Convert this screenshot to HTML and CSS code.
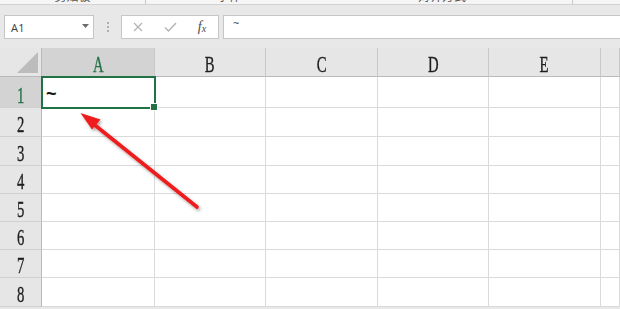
FILE: index.html
```html
<!DOCTYPE html>
<html>
<head>
<meta charset="utf-8">
<link rel="stylesheet" href="styles.css">
</head>
<body>
<div class="app">
  <div class="ribbon-edge">
    <div class="grp grp-1"><span>剪贴板</span></div>
    <div class="grp grp-2"><span>字体</span></div>
    <div class="grp grp-3"><span>对齐方式</span></div>
    <div class="grp grp-4"></div>
  </div>

  <div class="formula-bar">
    <div class="name-box">
      <span class="name-text">A1</span>
      <svg class="dd" width="7" height="4" viewBox="0 0 7 4"><path d="M0 0H7L3.5 4Z" fill="#6d6d6d"/></svg>
    </div>
    <div class="grip"><i></i><i></i><i></i></div>
    <div class="fx-box">
      <div class="slot">
        <svg width="10" height="10" viewBox="0 0 10 10"><path d="M1 1L9 9M9 1L1 9" stroke="#b3b3b3" stroke-width="1.2" fill="none"/></svg>
      </div>
      <div class="slot">
        <svg width="13" height="10" viewBox="0 0 13 10"><path d="M1 5.5L4.5 9L12 1" stroke="#b3b3b3" stroke-width="1.3" fill="none"/></svg>
      </div>
      <div class="slot"><span class="fx">f<sub>x</sub></span></div>
    </div>
    <div class="formula-input">~</div>
  </div>

  <div class="sheet">
    <div class="hd corner"><div class="tri"></div></div>
    <div class="hd col sel"><span class="lbl">A</span></div>
    <div class="hd col"><span class="lbl">B</span></div>
    <div class="hd col"><span class="lbl">C</span></div>
    <div class="hd col"><span class="lbl">D</span></div>
    <div class="hd col"><span class="lbl">E</span></div>
    <div class="hd col"></div>

    <div class="hd row sel"><span class="lbl">1</span></div>
    <div class="cell active"><span class="val">~</span></div>
    <div class="cell"></div><div class="cell"></div><div class="cell"></div><div class="cell"></div><div class="cell"></div>

    <div class="hd row"><span class="lbl">2</span></div>
    <div class="cell"></div><div class="cell"></div><div class="cell"></div><div class="cell"></div><div class="cell"></div><div class="cell"></div>

    <div class="hd row"><span class="lbl">3</span></div>
    <div class="cell"></div><div class="cell"></div><div class="cell"></div><div class="cell"></div><div class="cell"></div><div class="cell"></div>

    <div class="hd row"><span class="lbl">4</span></div>
    <div class="cell"></div><div class="cell"></div><div class="cell"></div><div class="cell"></div><div class="cell"></div><div class="cell"></div>

    <div class="hd row"><span class="lbl">5</span></div>
    <div class="cell"></div><div class="cell"></div><div class="cell"></div><div class="cell"></div><div class="cell"></div><div class="cell"></div>

    <div class="hd row"><span class="lbl">6</span></div>
    <div class="cell"></div><div class="cell"></div><div class="cell"></div><div class="cell"></div><div class="cell"></div><div class="cell"></div>

    <div class="hd row"><span class="lbl">7</span></div>
    <div class="cell"></div><div class="cell"></div><div class="cell"></div><div class="cell"></div><div class="cell"></div><div class="cell"></div>

    <div class="hd row"><span class="lbl">8</span></div>
    <div class="cell"></div><div class="cell"></div><div class="cell"></div><div class="cell"></div><div class="cell"></div><div class="cell"></div>
  </div>

  <svg class="arrow" width="620" height="309" viewBox="0 0 620 309">
    <defs>
      <filter id="sh" x="-20%" y="-20%" width="140%" height="140%">
        <feDropShadow dx="1.5" dy="2" stdDeviation="1.6" flood-color="#000" flood-opacity="0.35"/>
      </filter>
    </defs>
    <g filter="url(#sh)">
      <line x1="197" y1="207" x2="91" y2="122" stroke="#ee1c1c" stroke-width="3.6" stroke-linecap="round"/>
      <path d="M80.5 113L100.5 119.5L92 129.5Z" fill="#ee1c1c"/>
    </g>
  </svg>
</div>
</body>
</html>
```

FILE: styles.css
```css
* { box-sizing: border-box; }

html, body {
  margin: 0;
  padding: 0;
}

body {
  width: 620px;
  height: 309px;
  overflow: hidden;
  background: #e8e8e8;
  font-family: "Open Sans", "Noto Sans", sans-serif;
}

.app {
  position: relative;
  width: 620px;
  height: 309px;
  overflow: hidden;
}

/* ribbon bottom edge (group labels cut off by the window top) */
.ribbon-edge {
  height: 5px;
  background: #f5f5f5;
  border-bottom: 1px solid #d3d3d3;
  display: flex;
  overflow: hidden;
}

.grp {
  height: 4px;
  overflow: hidden;
  display: flex;
  justify-content: center;
  border-right: 1px solid #c8c8c8;
}

.grp span {
  font-family: "Noto Sans CJK SC", sans-serif;
  font-size: 12px;
  line-height: 12px;
  margin-top: -10px;
  color: #555;
}

.grp-1 { width: 146px; }
.grp-2 { width: 166px; border-right: none; }
.grp-3 { width: 261px; }
.grp-4 { flex: 1; border-right: none; }

/* formula bar */
.formula-bar {
  margin-top: 10px;
  height: 24px;
  display: flex;
  align-items: stretch;
}

.name-box {
  margin-left: 4px;
  width: 90px;
  background: #fff;
  border: 1px solid #c6c6c6;
  display: flex;
  align-items: center;
  justify-content: space-between;
  padding: 0 4px 0 6px;
}

.name-text {
  font-size: 11px;
  color: #3a3a3a;
  letter-spacing: 0.3px;
}

.dd { display: block; margin-top: -2px; }

.grip {
  width: 27px;
  display: flex;
  flex-direction: column;
  align-items: center;
  justify-content: center;
  gap: 2px;
}

.grip i {
  display: block;
  width: 2px;
  height: 2px;
  background: #b0b0b0;
}

.fx-box {
  width: 98px;
  background: #fff;
  border: 1px solid #c6c6c6;
  display: flex;
}

.slot {
  width: 32px;
  display: flex;
  align-items: center;
  justify-content: center;
}

.slot svg { display: block; }

.fx {
  font-family: "Liberation Serif", serif;
  font-style: italic;
  font-size: 14px;
  color: #4a4a4a;
  line-height: 1;
}

.fx sub {
  font-size: 10px;
  vertical-align: -1px;
}

.formula-input {
  flex: 1;
  margin-left: 4px;
  margin-right: -2px;
  background: #fff;
  border: 1px solid #c6c6c6;
  font-size: 11px;
  color: #333;
  padding: 1px 0 0 9px;
  line-height: 12px;
}

/* sheet grid */
.sheet {
  margin-top: 9px;
  display: grid;
  grid-template-columns: 42px 113px 111px 112px 111px 112px 1fr;
  grid-template-rows: 29px 31px 29px 29px 28px 28px 28px 28px 29px;
  background: #fff;
}

.hd {
  background: #e6e6e6;
  display: flex;
  justify-content: center;
  align-items: flex-end;
  overflow: hidden;
}

.col {
  border-right: 1px solid #c9c9c9;
  border-bottom: 1px solid #b9b9b9;
}

.row {
  border-right: 1px solid #b9b9b9;
  border-bottom: 1px solid #d0d0d0;
}

.corner {
  border-right: 1px solid #b9b9b9;
  border-bottom: 1px solid #b9b9b9;
  justify-content: flex-end;
  padding: 0 3px 3px 0;
}

.tri {
  width: 21px;
  height: 21px;
  background: #bcbcbc;
  clip-path: polygon(100% 0, 100% 100%, 0 100%);
}

.hd.sel {
  background: #d3d3d3;
}

.lbl {
  display: inline-block;
  font-family: "Liberation Serif", serif;
  font-size: 23px;
  line-height: 1;
  color: #1e1e1e;
  transform: scaleX(0.64);
  -webkit-text-stroke: 0.35px currentColor;
}

.hd.sel .lbl {
  color: #217346;
}

.cell {
  background: #fff;
  border-right: 1px solid #dadada;
  border-bottom: 1px solid #dadada;
}

.cell.active {
  position: relative;
  outline: 2px solid #217346;
  outline-offset: -1px;
  z-index: 1;
  padding: 6px 0 0 4px;
}

.cell.active::after {
  content: "";
  position: absolute;
  right: -4px;
  bottom: -4px;
  width: 6px;
  height: 6px;
  background: #217346;
  border: 1px solid #fff;
}

.val {
  font-family: "Liberation Sans", sans-serif;
  font-weight: bold;
  font-size: 18px;
  line-height: 18px;
  color: #111;
}

.arrow {
  position: absolute;
  left: 0;
  top: 0;
  pointer-events: none;
  z-index: 5;
}
```
